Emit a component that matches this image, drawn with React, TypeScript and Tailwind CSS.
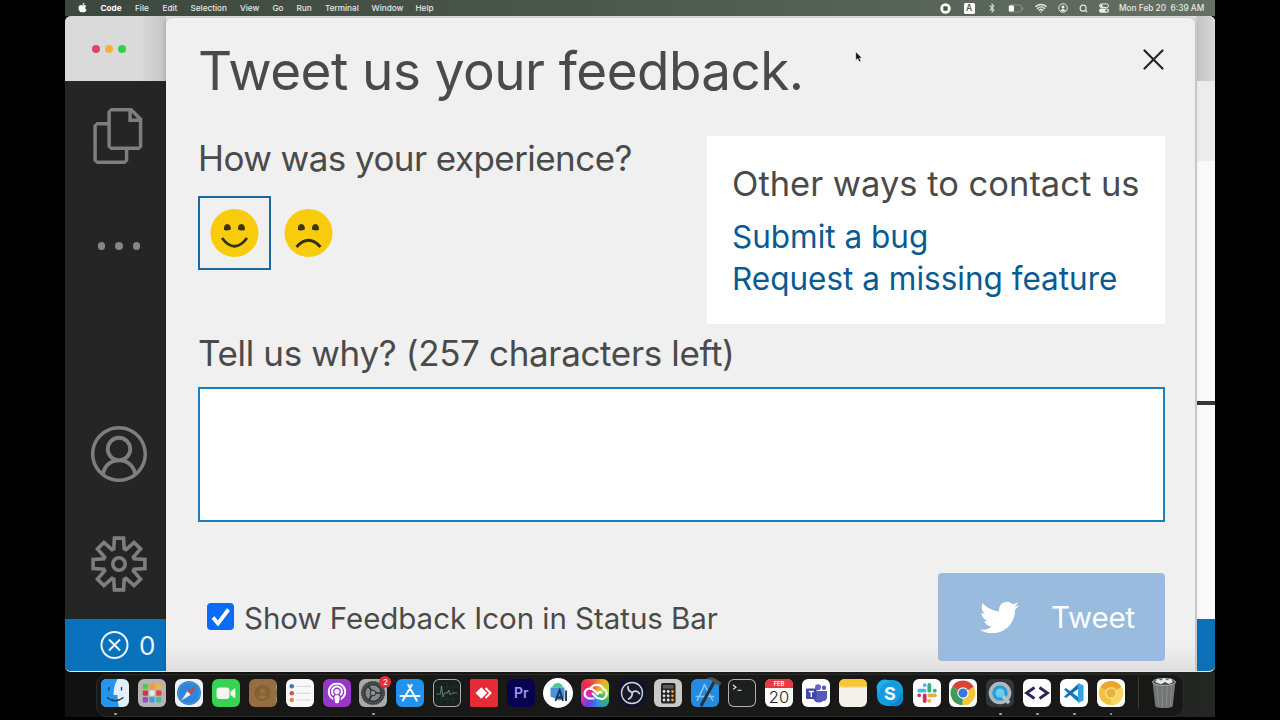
import type { ReactNode } from "react";
import { FaApple, FaBluetoothB, FaPodcast, FaTwitter } from "react-icons/fa";
import { VscAccount, VscFiles } from "react-icons/vsc";
import { Search, Wifi } from "lucide-react";

const MENUS = [
  { label: "File", cls: "w-[27.5px]" },
  { label: "Edit", cls: "w-[28px]" },
  { label: "Selection", cls: "w-[49.5px]" },
  { label: "View", cls: "w-[32.5px]" },
  { label: "Go", cls: "w-[24px]" },
  { label: "Run", cls: "w-[28.5px]" },
  { label: "Terminal", cls: "w-[46.5px]" },
  { label: "Window", cls: "w-[44px]" },
  { label: "Help", cls: "w-[20px]" },
];

const GEAR_POINTS = Array.from({ length: 8 }, (_, k) =>
  [[-19, 16], [-10, 26.3], [10, 26.3], [19, 16]].map(([deg, r]) => {
    const a = ((k * 45 + deg) * Math.PI) / 180;
    return `${(28 + r * Math.sin(a)).toFixed(2)},${(28 - r * Math.cos(a)).toFixed(2)}`;
  }).join(" ")
).join(" ");

function Gear() {
  return (
    <svg width="56" height="56" viewBox="0 0 56 56" fill="none" stroke="#7e7e7e" strokeWidth="3.6">
      <polygon points={GEAR_POINTS} />
      <circle cx="28" cy="28" r="6.2" />
    </svg>
  );
}

function Face({ sad = false }: { sad?: boolean }) {
  return (
    <svg width="49" height="49" viewBox="0 0 49 49">
      <circle cx="24.5" cy="24" r="24" fill="#f8cc0c" />
      <path d="M14 21 q-.6-5.5 3.3-6 q4 .5 3.5 5.5 q-3.5 1.5-6.8.5z M28 20.5 q-.5-5 3.4-5.5 q4 .5 3.5 6 q-3.5 1-6.9-.5z" fill="#3d3510" />
      <path d={sad ? "M12.5 38 Q24.5 24.5 36.5 38" : "M12 29 Q24.5 45.5 37 29"} fill="none" stroke="#33301a" strokeWidth="2.8" />
    </svg>
  );
}

function MenuBar() {
  return (
    <div className="flex h-4 shrink-0 items-center bg-linear-to-r from-[#3c473e] via-[#4d594e] to-[#657064] text-[8.2px] font-medium leading-[15px] text-[#e4e9e4]">
      <FaApple size={11} className="ml-[12px] -mt-px text-white" />
      <span className="ml-[12.5px] w-[34.5px] font-bold text-white">Code</span>
      {MENUS.map((m) => (
        <span key={m.label} className={`${m.cls} shrink-0 whitespace-nowrap`}>{m.label}</span>
      ))}
      <div className="ml-auto flex items-center pr-[11px]">
        <svg width="11" height="11" viewBox="0 0 11 11"><circle cx="5.5" cy="5.5" r="5.2" fill="#fff" /><rect x="3.3" y="3.3" width="4.4" height="4.4" rx=".6" fill="#4b564b" /></svg>
        <span className="ml-[13px] flex h-[11px] w-[11px] items-center justify-center rounded-[1.5px] bg-white text-[8.5px] font-semibold leading-none text-[#566156]">A</span>
        <FaBluetoothB size={10} className="ml-[12px]" />
        <svg className="ml-[11px]" width="16" height="9" viewBox="0 0 16 9"><rect x=".5" y="1" width="13" height="7" rx="2" fill="none" stroke="#8f998f" strokeWidth=".8" /><rect x="1" y="1.5" width="5" height="6" rx="1" fill="#fff" /><path d="M14.8 3.3v2.4" stroke="#8f998f" /></svg>
        <Wifi size={12} strokeWidth={3} className="ml-[11px]" />
        <svg className="ml-[11px]" width="10" height="10" viewBox="0 0 10 10"><circle cx="5" cy="5" r="4.3" fill="none" stroke="#edf0ed" strokeWidth=".9" /><circle cx="5" cy="3.9" r="1.5" fill="#edf0ed" /><path d="M2.3 7.6q2.7-3 5.4 0q-2.7 2-5.4 0z" fill="#edf0ed" /></svg>
        <Search size={9} strokeWidth={3} className="ml-[11px]" />
        <svg className="ml-[11.5px]" width="10" height="10" viewBox="0 0 10 10"><rect x=".5" y=".9" width="9" height="3.6" rx="1.8" fill="none" stroke="#edf0ed" /><circle cx="2.6" cy="2.7" r="1.3" fill="#fff" /><rect x="0" y="5.4" width="10" height="4.4" rx="2.2" fill="#edf0ed" /><circle cx="7.5" cy="7.6" r="1.2" fill="#667166" /></svg>
        <span className="ml-[10px] w-[85px] whitespace-pre text-[8.3px]">Mon Feb 20  6:39 AM</span>
      </div>
    </div>
  );
}

function ActivityBar() {
  return (
    <div className="flex w-[101px] shrink-0 flex-col bg-[#252526]">
      <div className="flex h-[65px] items-start gap-[5px] bg-linear-to-r from-[#dadada] from-75% to-[#c3c3c3] pl-[27px] pt-[29px]">
        <span className="h-2 w-2 rounded-full bg-[#e0436a]" />
        <span className="h-2 w-2 rounded-full bg-[#eeb43c]" />
        <span className="h-2 w-2 rounded-full bg-[#35cf4b]" />
      </div>
      <div className="flex flex-1 flex-col items-center pl-[7px] pt-[27px] text-[#7e7e7e]">
        <VscFiles size={56} />
        <div className="mt-[78px] flex gap-[10px]">
          <span className="h-[7.5px] w-[7.5px] rounded-full bg-[#868686]" />
          <span className="h-[7.5px] w-[7.5px] rounded-full bg-[#868686]" />
          <span className="h-[7.5px] w-[7.5px] rounded-full bg-[#868686]" />
        </div>
        <VscAccount size={56} className="mt-auto" />
        <div className="mb-[27px] mt-[54px]"><Gear /></div>
      </div>
      <div className="flex h-[52px] items-center bg-[#0a72bd] pl-[35px] text-[26px] text-[#eaf5fd]">
        <svg width="29" height="29" viewBox="0 0 29 29" fill="none" stroke="#eaf5fd" strokeWidth="2"><circle cx="14.5" cy="14" r="13" /><path d="M9 8.500l11 11M20 8.500L9 19.500" /></svg>
        <span className="ml-[10px]">0</span>
      </div>
    </div>
  );
}

function FeedbackPanel() {
  return (
    <div className="relative z-10 mt-[2px] flex flex-1 flex-col rounded-t-[6px] bg-[#f0f0f0] bg-linear-to-b from-[#f0f0f0] from-96% to-[#dedede] pl-8 pr-[30px] pt-[23px] text-[#4a4a4a] shadow-[0_0_4px_rgba(0,0,0,0.2)]">
      <div className="flex items-start justify-between">
        <h1 className="whitespace-nowrap text-[53px] leading-[60px] tracking-[-0.54px]">Tweet us your feedback.</h1>
        <button aria-label="Close" className="mr-px mt-[8px]">
          <svg width="21" height="21" viewBox="0 0 21 21" stroke="#252525" strokeWidth="2.2" strokeLinecap="round"><path d="M1.5 1.5l18 18M19.5 1.5l-18 18" /></svg>
        </button>
      </div>
      <div className="mt-[35px] flex h-[188px] justify-between">
        <div>
          <h2 className="whitespace-nowrap text-[35px] leading-[44px] tracking-[-0.56px]">How was your experience?</h2>
          <div className="mt-4 flex">
            <button aria-label="Happy" className="flex h-[74px] w-[73px] items-center justify-center border-2 border-[#17699f]"><Face /></button>
            <button aria-label="Sad" className="flex h-[74px] w-[74px] items-center justify-center"><Face sad /></button>
          </div>
        </div>
        <div className="w-[458px] bg-white pl-[25px] pt-[26px]">
          <h2 className="whitespace-nowrap text-[34.5px] leading-[44px]">Other ways to contact us</h2>
          <div className="mt-[10px] flex flex-col whitespace-nowrap text-[31.5px] leading-[42px] text-[#0a5a92]">
            <a>Submit a bug</a>
            <a>Request a missing feature</a>
          </div>
        </div>
      </div>
      <h2 className="mt-[7px] whitespace-nowrap text-[35px] leading-[44px] tracking-[-0.35px]">Tell us why? (257 characters left)</h2>
      <textarea className="mt-[12px] h-[135px] w-full shrink-0 resize-none border-2 border-[#1a7fbd] bg-white outline-none" />
      <div className="mt-[51px] flex h-[88px] items-center justify-between">
        <label className="flex items-center pl-[9px]">
          <svg className="-mt-[2px]" width="27" height="27" viewBox="0 0 27 27"><rect width="27" height="27" rx="4" fill="#0a6bf4" /><path d="M6 14.5l5 6L21.5 6.5" fill="none" stroke="#fff" strokeWidth="3.8" /></svg>
          <span className="ml-[10px] whitespace-nowrap pt-px text-[29.5px] leading-[40px] tracking-[-0.04px]">Show Feedback Icon in Status Bar</span>
        </label>
        <button className="flex h-[88px] w-[227px] items-center rounded-[4px] bg-[#98bbde] pl-[42px] text-[29.5px] tracking-[-0.2px] text-white">
          <FaTwitter size={39} />
          <span className="ml-[32px]">Tweet</span>
        </button>
      </div>
      <svg className="absolute left-[689px] top-[33px]" width="8" height="12" viewBox="0 0 8 12"><path d="M.8 .8v8.4l2-1.7 1.5 3.2 1.5-.7-1.4-3h2.4z" fill="#111" stroke="#fff" strokeWidth=".4" /></svg>
    </div>
  );
}

function EditorEdge() {
  return (
    <div className="flex w-5 shrink-0 flex-col border-l-2 border-[#d6d6d6] bg-[#f9f9f9]">
      <div className="h-[65px] bg-linear-to-r from-[#c4c4c4] to-[#d6d6d6]" />
      <div className="h-[80px] bg-[#ececec]" />
      <div className="h-[240px]" />
      <div className="h-[4px] bg-[#363636]" />
      <div className="flex-1" />
      <div className="h-[52px] bg-[#0b70b8]" />
    </div>
  );
}

function Tile({ bg, children }: { bg: string; children?: ReactNode }) {
  return (
    <svg width="28" height="28" viewBox="0 0 28 28">
      <rect width="28" height="28" rx="6" fill={bg} />
      {children}
    </svg>
  );
}

const LAUNCHPAD = ["#55c74d", "#f39b35", "#f0b53c", "#d4383f", "#e8e8e8", "#e0424a", "#9450c8", "#3fa0d8", "#44b9a0"];

const DOCK: { name: string; icon: ReactNode; open?: boolean; badge?: string }[] = [
  {
    name: "Finder",
    open: true,
    icon: (
      <Tile bg="#e4eef8">
        <path d="M6 0h10.5q-4 7-4 16h4q-.5 6 1.5 12H6q-6 0-6-6V6q0-6 6-6z" fill="#2495ed" />
        <path d="M7.8 8v3.5M20.5 8v3.5M6 18.5q8 6.5 16.5 0" stroke="#15395d" strokeWidth="1.3" fill="none" />
      </Tile>
    ),
  },
  {
    name: "Launchpad",
    icon: (
      <Tile bg="#b5b3b3">
        {LAUNCHPAD.map((c, i) => (
          <rect key={c} x={4.7 + (i % 3) * 6.7} y={4.7 + Math.floor(i / 3) * 6.7} width="5.3" height="5.3" rx="1.2" fill={c} />
        ))}
      </Tile>
    ),
  },
  {
    name: "Safari",
    icon: (
      <Tile bg="#eef1f5">
        <circle cx="14" cy="14" r="12" fill="#2f86d8" />
        <circle cx="14" cy="14" r="10.5" fill="none" stroke="#8fc5ef" strokeWidth=".7" strokeDasharray=".6 1" />
        <path d="M21.5 6.5L12.3 12.3l3.4 3.4z" fill="#d24148" />
        <path d="M6.5 21.5l5.8-9.2 3.4 3.4z" fill="#edf0f5" />
      </Tile>
    ),
  },
  {
    name: "FaceTime",
    icon: <Tile bg="#37d352"><rect x="4.5" y="8.5" width="13" height="11.5" rx="3" fill="#f0f8ef" /><path d="M18.5 12.5l4.8-3.5v10.5l-4.8-3.5z" fill="#f0f8ef" /></Tile>,
  },
  {
    name: "Contacts",
    icon: (
      <Tile bg="#946d42">
        <circle cx="13.5" cy="14" r="7.3" fill="#86622f" stroke="#7d5a31" />
        <circle cx="13.5" cy="12" r="2.5" fill="#967049" />
        <path d="M9 18.3q4.5-5 9 0q-4.5 3.5-9 0z" fill="#967049" />
        <path d="M27.5 6v5M27.5 18v5" stroke="#849e83" />
      </Tile>
    ),
  },
  {
    name: "Reminders",
    icon: (
      <Tile bg="#f8f8f8">
        <circle cx="5.8" cy="7.3" r="2.3" fill="#4478bd" /><circle cx="5.8" cy="14.2" r="2.3" fill="#d4544e" /><circle cx="5.8" cy="21" r="2.3" fill="#dd8950" />
        <path d="M10.5 7.3H25M10.5 14.2H25M10.5 21H25" stroke="#c9c9c9" strokeWidth=".8" />
      </Tile>
    ),
  },
  {
    name: "Podcasts",
    icon: <Tile bg="#9637c8"><g color="#fff"><FaPodcast x={3.5} y={3.5} size={21} /></g></Tile>,
  },
  {
    name: "System Preferences",
    open: true,
    badge: "2",
    icon: (
      <Tile bg="#a8aaab">
        <circle cx="14" cy="14" r="11.3" fill="#4d5051" stroke="#303335" strokeWidth="1.6" strokeDasharray="1.2 .7" />
        <circle cx="14" cy="14" r="8.3" fill="#85888a" stroke="#292c2e" strokeWidth="1.3" />
        <circle cx="14" cy="14" r="2.8" fill="#8e9192" stroke="#292c2e" />
        <path d="M12.5 11.5L9.5 7.2M17 14h5M12.5 16.5L10 21" stroke="#292c2e" strokeWidth="1.6" />
      </Tile>
    ),
  },
  {
    name: "App Store",
    icon: <Tile bg="#2192ee"><path d="M15.7 6L8 19.5M12.3 6l8.5 15.5M4.5 17h12M19 17h4.5M6.8 21.5l.8-1.3" stroke="#eef7ff" strokeWidth="2.1" strokeLinecap="round" /></Tile>,
  },
  {
    name: "Activity Monitor",
    icon: (
      <Tile bg="#a8acaa">
        <rect x="1" y="1" width="26" height="26" rx="5" fill="#18211f" />
        <path d="M3 8h22M3 14h22M3 20h22M8 3v22M14 3v22M20 3v22" stroke="#294038" strokeWidth=".4" />
        <path d="M3.5 15h4l1-8 1.5 11 1.5-4h3l1.2-3 1.5 5 2-2h5" fill="none" stroke="#78a795" strokeWidth=".7" />
      </Tile>
    ),
  },
  {
    name: "AnyDesk",
    icon: (
      <svg width="28" height="28" viewBox="0 0 28 28">
        <rect width="28" height="28" rx="1.5" fill="#e52b35" />
        <path d="M11.3 8.2l5.8 5.8-5.8 5.8L5.5 14z" fill="#fff" />
        <path d="M15.5 9l5 5-5 5" fill="none" stroke="#fff" strokeWidth="2" />
      </svg>
    ),
  },
  {
    name: "Premiere Pro",
    icon: <Tile bg="#070252"><text x="14.2" y="18.5" textAnchor="middle" fontSize="14" fontWeight="600" fill="#9e98f4">Pr</text></Tile>,
  },
  {
    name: "Android Studio",
    icon: (
      <svg width="30" height="30" viewBox="0 0 30 30" className="-mx-px shrink-0">
        <circle cx="15" cy="15" r="15" fill="#fcfdff" />
        <path d="M9 9.5q1.5-4.5 6-4.5 4 0 5 4.5z" fill="#4fc88d" />
        <path d="M7.5 9.5h14v11l-5 2-9-4z" fill="#4b91d7" />
        <path d="M12.5 23l4.2-11 3.3 11M14 19.5h5M23 12.5V23" fill="none" stroke="#17314e" strokeWidth="1.8" />
      </svg>
    ),
  },
  {
    name: "Creative Cloud",
    icon: (
      <div className="h-7 w-7 rounded-[6px] bg-[conic-gradient(from_300deg,#e5265e,#f4463b,#f2a228,#b9d932,#36b36c,#328ee6,#6b3fe0,#dc2ec0,#e5265e)]">
        <svg width="28" height="28" viewBox="0 0 28 28" fill="none" stroke="#fff" strokeWidth="2.2" strokeLinecap="round">
          <path d="M12.5 19.5H9.3a5 5 0 1 1 1.2-9.6q1.9.5 3.3 2.2l2.6 2.9" />
          <path d="M9.5 9.8a7.2 7.2 0 0 1 13 .3a4.9 4.9 0 0 1-3.8 9.4q-2.5 0-4.5-2.3l-2.5-2.7M16.4 15l1-1.2q1.4-1.3 2.8-.2" />
        </svg>
      </div>
    ),
  },
  {
    name: "OBS",
    icon: (
      <Tile bg="#11132c">
        <circle cx="14" cy="14" r="10.5" fill="#17182a" stroke="#d4d5dc" strokeWidth="1.3" />
        <path d="M14.2 13.5Q9.5 12 10 7.5M14.2 13.5Q18.5 10.5 21.5 14.5M14.2 13.5Q14.5 18.5 10.5 20" fill="none" stroke="#d4d5dc" strokeWidth="1.7" strokeLinecap="round" />
      </Tile>
    ),
  },
  {
    name: "Calculator",
    icon: (
      <Tile bg="#c9c9c7">
        <rect x="7" y="4" width="14.5" height="20.5" rx="1.8" fill="#252525" />
        <rect x="9" y="6" width="10.5" height="3.5" fill="#5a5d5c" />
        {[12.5, 16.8, 21].map((y) => (
          <g key={y}><circle cx="10" cy={y} r="1.4" fill="#e2e2e2" /><circle cx="14.2" cy={y} r="1.4" fill="#e2e2e2" /><circle cx="18.5" cy={y} r="1.4" fill="#f4973c" /></g>
        ))}
      </Tile>
    ),
  },
  {
    name: "Xcode",
    icon: (
      <svg width="32" height="30" viewBox="0 0 32 30" className="-mr-1 mb-[2px] shrink-0">
        <rect y="2" width="28" height="28" rx="6" fill="#248be0" />
        <path d="M14 7L6 24M13 7l9 17M4.5 19.5h19" stroke="#85c8f5" strokeWidth="1.6" />
        <path d="M23 5L10 29" stroke="#2a3035" strokeWidth="3" />
        <path d="M15.500 1.500q6-3 11 1.500l4 3-2 3-4-2.500q-4-3.500-9-5z" fill="#4c5358" />
      </svg>
    ),
  },
  {
    name: "Terminal",
    icon: <Tile bg="#b0b2b1"><rect x="1" y="1" width="26" height="26" rx="5" fill="#1d1f1f" /><path d="M5 6l3 2.2-3 2.2M9.5 11.2h4" fill="none" stroke="#eee" strokeWidth="1.1" /></Tile>,
  },
  {
    name: "Calendar",
    icon: (
      <Tile bg="#fbfbfb">
        <path d="M6 0h16q6 0 6 6v3H0V6q0-6 6-6z" fill="#e83a45" />
        <text x="14" y="7" textAnchor="middle" fontSize="5.8" fontWeight="600" fill="#fff">FEB</text>
        <text x="14" y="23.5" textAnchor="middle" fontSize="16.5" fontWeight="300" fill="#252525">20</text>
      </Tile>
    ),
  },
  {
    name: "Teams",
    icon: (
      <Tile bg="#fdfdff">
        <circle cx="16" cy="8.3" r="3" fill="#6367c2" /><circle cx="22" cy="8.7" r="2.2" fill="#5058bb" />
        <path d="M11 12h14v7q-1 3.5-4 3-2 2-5.5 1.5-4-1-4.5-5z" fill="#575bb8" />
        <rect x="4" y="9.5" width="10.5" height="10.5" rx="1" fill="#4448a5" />
        <path d="M6.8 12.5h5M9.3 12.5v5.5" stroke="#fff" strokeWidth="1.4" />
      </Tile>
    ),
  },
  {
    name: "Notes",
    icon: <Tile bg="#f3f1e9"><path d="M6 0h16q6 0 6 6v1.8H0V6q0-6 6-6z" fill="#f9c534" /><path d="M0 8.6h28" stroke="#c6b780" strokeWidth=".6" strokeDasharray="1 1" /></Tile>,
  },
  {
    name: "Skype",
    icon: (
      <svg width="28" height="28" viewBox="0 0 28 28">
        <rect x="1" y="1" width="26" height="26" rx="10" fill="#159de3" /><circle cx="8.8" cy="8.8" r="8.2" fill="#24acea" /><circle cx="19.2" cy="19.2" r="8.2" fill="#0d87d4" /><circle cx="14" cy="14" r="10.5" fill="#159bdf" />
        <text x="14" y="20.5" textAnchor="middle" fontSize="18" fontWeight="700" fill="#fff">S</text>
      </svg>
    ),
  },
  {
    name: "Slack",
    icon: (
      <Tile bg="#fdfdfd">
        <g strokeWidth="3.8" strokeLinecap="round">
          <path d="M11.7 6.2h0M6.2 11.7h5.5" stroke="#3fbde8" />
          <path d="M16.3 6v5.7M21.8 11.7h0" stroke="#31b37c" />
          <path d="M16.3 16.3H22M16.3 21.8h0" stroke="#e8b13a" />
          <path d="M11.7 16.3V22M6.2 16.3h0" stroke="#d62b5d" />
        </g>
      </Tile>
    ),
  },
  {
    name: "Chrome",
    icon: (
      <Tile bg="#fafafa">
        <path d="M14 14L3.2 7.8A12.3 12.3 0 0 1 24.8 8z" fill="#d94436" />
        <path d="M14 14L24.8 8A12.3 12.3 0 0 1 13.5 26.3z" fill="#f5c63c" />
        <path d="M14 14l-.5 12.3A12.3 12.3 0 0 1 3.2 7.8z" fill="#3e9c56" />
        <circle cx="14" cy="14" r="5.7" fill="#fff" /><circle cx="14" cy="14" r="4.6" fill="#3478dc" />
      </Tile>
    ),
  },
  {
    name: "QuickTime",
    open: true,
    icon: (
      <Tile bg="#33373c">
        <circle cx="14" cy="14" r="9.5" fill="#279ed5" stroke="#aeb9c2" strokeWidth="3.6" />
        <circle cx="14" cy="14" r="4.5" fill="#69cdec" />
        <path d="M17 17l6 7" stroke="#b5c1c8" strokeWidth="3.6" />
      </Tile>
    ),
  },
  {
    name: "Code Editor",
    open: true,
    icon: <Tile bg="#fefefe"><path d="M11.5 8.5L3.5 14l8 5.5M16.5 8.5l8 5.5-8 5.5" fill="none" stroke="#2d235b" strokeWidth="2.8" /></Tile>,
  },
  {
    name: "VS Code",
    open: true,
    icon: (
      <Tile bg="#fbfdff">
        <path d="M4 10.5l2-1.5L19 18.8v5z" fill="#1678bc" />
        <path d="M4 17.5l2 1.5L19 9.2v-5z" fill="#1571b0" />
        <path d="M18 4l5.5 2.5v15L18 24z" fill="#36a2e6" />
      </Tile>
    ),
  },
  {
    name: "Chrome Canary",
    open: true,
    icon: (
      <Tile bg="#fbfaf6">
        <circle cx="14" cy="14" r="12" fill="#f4c13a" />
        <path d="M14 14L3.6 8A12 12 0 0 1 24.4 8z" fill="#eaa52c" />
        <path d="M14 14L24.4 8A12 12 0 0 1 14 26z" fill="#f8d55e" />
        <circle cx="14" cy="14" r="6" fill="#f7dd8e" /><circle cx="14" cy="14" r="4.5" fill="#e9b23b" />
      </Tile>
    ),
  },
];

function Trash() {
  return (
    <svg width="26" height="32" viewBox="0 0 26 32">
      <path d="M1.5 4h23l-2.7 25q-.5 2-8.8 2t-8.8-2z" fill="#717573" />
      <path d="M6 7l1.5 22M11 7l.5 23M16 7l-.5 23M21 7l-1.8 22" stroke="#8f9391" strokeWidth=".8" />
      <ellipse cx="13" cy="5" rx="11.5" ry="3.5" fill="#484c4a" stroke="#a9adab" />
      <path d="M4 5l3-3.5 3 2L13 .8l3 2.5 3.5-2L22 5l-4 2-4-2-4 2.2z" fill="#e6e8e7" />
    </svg>
  );
}

function Dock() {
  return (
    <div className="flex h-[45px] shrink-0 bg-linear-to-r from-[#101110] via-[#171816] to-[#242723] pl-[31px] pt-[2px]">
      <div className="flex h-[43px] w-[1088px] items-center rounded-[11px] border border-[#2b2c2a] bg-[#181917] pb-[5px] pl-[4.3px]">
        <div className="flex items-center gap-[8.88px]">
          {DOCK.map((app) => (
            <div key={app.name} className="relative flex h-7 w-7 shrink-0 items-center justify-center">
              {app.icon}
              {app.open && <span className="absolute -bottom-[8px] left-[13px] h-[2.5px] w-[2.5px] rounded-full bg-[#a9aaa9]" />}
              {app.badge && <span className="absolute -right-[4px] -top-[3px] flex h-3 w-3 items-center justify-center rounded-full bg-[#e32f3c] text-[8px] text-white">{app.badge}</span>}
            </div>
          ))}
        </div>
        <div className="ml-[13px] mr-[12px] h-8 w-px bg-[#3c3d3b]" />
        <Trash />
      </div>
    </div>
  );
}

export default function App() {
  return (
    <div className="flex h-[720px] w-[1280px] justify-center overflow-hidden bg-black font-[Inter,'Liberation_Sans',sans-serif]">
      <div className="flex h-[717px] w-[1150px] flex-col">
        <MenuBar />
        <div className="flex h-[656px] shrink-0 bg-[#151614]">
          <div className="flex flex-1 overflow-hidden rounded-[6px] border-b border-[#e4e8ea] bg-[#e4e4e4]">
            <ActivityBar />
            <FeedbackPanel />
            <EditorEdge />
          </div>
        </div>
        <Dock />
      </div>
    </div>
  );
}
